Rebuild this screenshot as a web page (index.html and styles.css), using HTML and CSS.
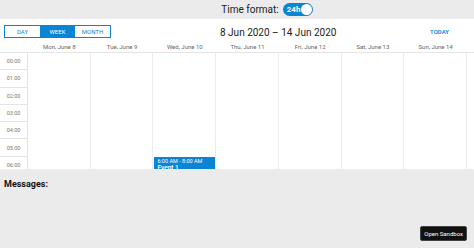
FILE: index.html
```
<!DOCTYPE html>
<html lang="en">
<head>
  <meta charset="UTF-8">
  <title>Week calendar</title>
  <link rel="stylesheet" href="styles.css">
</head>
<body>

  <div class="topbar">
    <span class="topbar-label">Time format:</span>
    <span class="toggle"><span class="toggle-text">24h</span><span class="toggle-knob"></span></span>
  </div>

  <div class="calendar">
    <div class="toolbar">
      <div class="views">
        <span class="view">DAY</span>
        <span class="view active">WEEK</span>
        <span class="view">MONTH</span>
      </div>
      <div class="title">8 Jun 2020 &ndash; 14 Jun 2020</div>
      <span class="today">TODAY</span>
    </div>

    <div class="days">
      <div class="corner"></div>
      <div class="day-name">Mon, June 8</div>
      <div class="day-name">Tue, June 9</div>
      <div class="day-name">Wed, June 10</div>
      <div class="day-name">Thu, June 11</div>
      <div class="day-name">Fri, June 12</div>
      <div class="day-name">Sat, June 13</div>
      <div class="day-name">Sun, June 14</div>
    </div>

    <div class="grid">
      <div class="times">
        <div class="time">00:00</div>
        <div class="time">01:00</div>
        <div class="time">02:00</div>
        <div class="time">03:00</div>
        <div class="time">04:00</div>
        <div class="time">05:00</div>
        <div class="time">06:00</div>
      </div>
      <div class="col"></div>
      <div class="col"></div>
      <div class="col">
        <div class="event">
          <div class="event-time">6:00 AM - 8:00 AM</div>
          <div class="event-title">Event 1</div>
        </div>
      </div>
      <div class="col"></div>
      <div class="col"></div>
      <div class="col"></div>
      <div class="col last"></div>
    </div>
  </div>

  <div class="messages">
    <h3>Messages:</h3>
    <button class="sandbox">Open Sandbox</button>
  </div>

</body>
</html>
```

FILE: styles.css
```
body {
  margin: 0;
  font-family: Roboto, 'Liberation Sans', sans-serif;
  color: #333;
  width: 474px;
  height: 248px;
  display: flex;
  flex-direction: column;
  overflow: hidden;
}
.topbar {
  height: 19px;
  background: #ebebeb;
  display: flex;
  align-items: center;
  justify-content: center;
  padding-left: 60px;
  gap: 4px;
}
.topbar-label {
  font-size: 10px;
  color: #222;
}
.toggle {
  width: 30px;
  height: 13px;
  border-radius: 7px;
  background: #0a84d4;
  display: flex;
  align-items: center;
  justify-content: space-between;
  padding: 0 1px 0 4px;
  box-sizing: border-box;
}
.toggle-text {
  color: #fff;
  font-size: 8px;
  font-weight: 700;
}
.toggle-knob {
  width: 11px;
  height: 11px;
  border-radius: 50%;
  background: #fff;
}
.calendar {
  height: 150px;
  display: flex;
  flex-direction: column;
  overflow: hidden;
}
.toolbar {
  height: 22px;
  display: flex;
  align-items: center;
  padding: 3px 0 0 4px;
  box-sizing: border-box;
}
.views {
  display: flex;
  border: 1px solid #0a84d4;
  height: 13px;
  box-sizing: border-box;
}
.view {
  width: 35px;
  font-size: 6px;
  color: #0a84d4;
  display: flex;
  align-items: center;
  justify-content: center;
}
.view.active {
  background: #0a84d4;
  color: #fff;
}
.title {
  margin-left: 109px;
  font-size: 10px;
  color: #222;
  padding-top: 2px;
}
.today {
  margin-left: auto;
  margin-right: 25px;
  font-size: 6px;
  font-weight: 600;
  color: #0a84d4;
}
.days {
  display: grid;
  grid-template-columns: 28px repeat(7, 1fr);
  padding-right: 7px;
  height: 11px;
  border-bottom: 1px solid #e4e4e4;
  align-items: center;
}
.day-name {
  font-size: 6px;
  color: #666;
  text-align: center;
}
.grid {
  flex: 1;
  display: grid;
  grid-template-columns: 28px repeat(7, 1fr);
  padding-right: 7px;
  overflow: hidden;
}
.times {
  border-right: 1px solid #e4e4e4;
}
.time {
  height: 17.3px;
  box-sizing: border-box;
  border-bottom: 1px solid #e4e4e4;
  font-size: 5.5px;
  color: #777;
  display: flex;
  align-items: center;
  justify-content: center;
}
.col {
  border-right: 1px solid #ececec;
  position: relative;
}
.event {
  position: absolute;
  top: 103.8px;
  left: 1px;
  right: 0;
  height: 34px;
  background: #0a84d4;
  color: #fff;
  padding: 1px 3px;
  box-sizing: border-box;
}
.event-time {
  font-size: 5.5px;
}
.event-title {
  font-size: 6.5px;
  font-weight: 500;
}
.messages {
  flex: 1;
  background: #ebebeb;
  padding: 0 4px;
  position: relative;
}
.messages h3 {
  font-size: 9px;
  line-height: 12px;
  font-weight: 700;
  color: #111;
  margin: 9px 0 0;
}
.sandbox {
  position: absolute;
  right: 7px;
  bottom: 7px;
  background: #111;
  color: #fff;
  border: 1px solid #444;
  border-radius: 2px;
  font-family: Roboto, 'Liberation Sans', sans-serif;
  font-size: 6px;
  padding: 3px 3px;
}
```
